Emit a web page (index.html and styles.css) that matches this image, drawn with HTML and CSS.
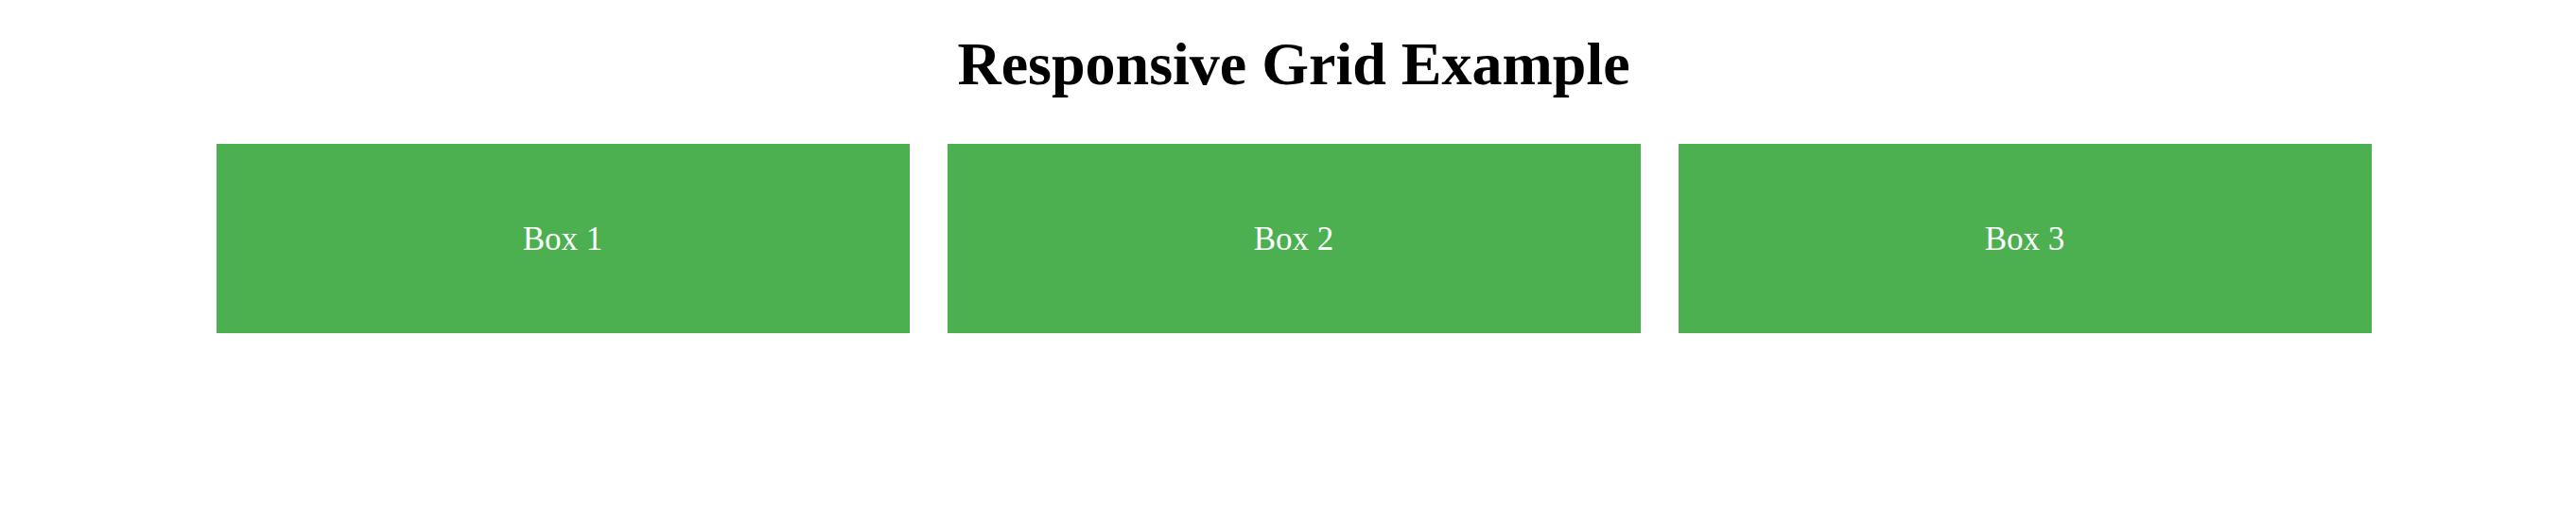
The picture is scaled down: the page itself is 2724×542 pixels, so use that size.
FILE: index.html
```html
<!DOCTYPE html>
<html lang="en">
<head>
    <meta charset="UTF-8">
    <meta name="viewport" content="width=device-width, initial-scale=1.0">
    <title>Responsive Grid Example</title>
    <link rel="stylesheet" href="styles.css">
</head>
<body>
    <div class="page">
        <h1 class="title">Responsive Grid Example</h1>

        <div class="grid">
            <div class="box">Box 1</div>
            <div class="box">Box 2</div>
            <div class="box">Box 3</div>
        </div>
    </div>
</body>
</html>
```

FILE: styles.css
```css
:root {
    --green: #4caf50;
    --text: #000000;
    --light: #ffffff;
}

* {
    margin: 0;
    padding: 0;
    box-sizing: border-box;
}

body {
    font-family: 'Liberation Serif', 'Times New Roman', serif;
    background-color: var(--light);
    color: var(--text);
    padding-left: 12px;
}

.title {
    padding-top: 31px;
    font-size: 64px;
    line-height: 74px;
    font-weight: bold;
    text-align: center;
    margin-bottom: 47px;
}

.grid {
    width: 2279px;
    margin: 0 auto;
    display: grid;
    grid-template-columns: repeat(3, 1fr);
    gap: 40px;
}

.box {
    height: 200px;
    padding-top: 2px;
    background-color: var(--green);
    color: var(--light);
    font-size: 35px;
    display: flex;
    justify-content: center;
    align-items: center;
}
```
